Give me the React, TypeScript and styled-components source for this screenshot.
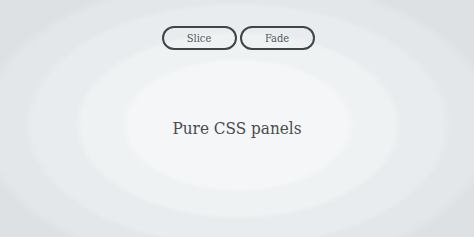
import styled, { createGlobalStyle } from "styled-components";

const GlobalStyle = createGlobalStyle`
  html, body {
    margin: 0;
    padding: 0;
  }
  body {
    font-family: "DejaVu Serif Condensed", "Liberation Serif", serif;
  }
`;

const Page = styled.div`
  width: 474px;
  height: 237px;
  display: flex;
  flex-direction: column;
  align-items: center;
  overflow: hidden;
  background: radial-gradient(
    ellipse 260px 150px at 238px 125px,
    #f4f6f7 0%,
    #f4f6f7 42%,
    #eff2f3 45%,
    #eff2f3 60%,
    #e9ecee 63%,
    #e9ecee 79%,
    #e3e7e9 82%,
    #e3e7e9 95%,
    #dde1e4 100%
  );
`;

const Nav = styled.nav`
  display: flex;
  gap: 3px;
  margin-top: 26px;
  margin-left: 2px;
`;

const Tab = styled.button`
  width: 75px;
  height: 24px;
  border: 2px solid #3f4548;
  border-radius: 12px;
  background: transparent;
  color: #50555a;
  font-family: "DejaVu Serif Condensed", "Liberation Serif", serif;
  font-size: 11px;
  padding: 0;
  cursor: pointer;
`;

const Stage = styled.main`
  flex: 1;
  display: flex;
  align-items: center;
  justify-content: center;
  padding-bottom: 32px;
`;

const Title = styled.h1`
  margin: 0;
  font-size: 17px;
  font-weight: 300;
  color: #4a4c4e;
`;

export default function App() {
  return (
    <>
      <GlobalStyle />
      <Page>
        <Nav>
          <Tab>Slice</Tab>
          <Tab>Fade</Tab>
        </Nav>
        <Stage>
          <Title>Pure CSS panels</Title>
        </Stage>
      </Page>
    </>
  );
}
